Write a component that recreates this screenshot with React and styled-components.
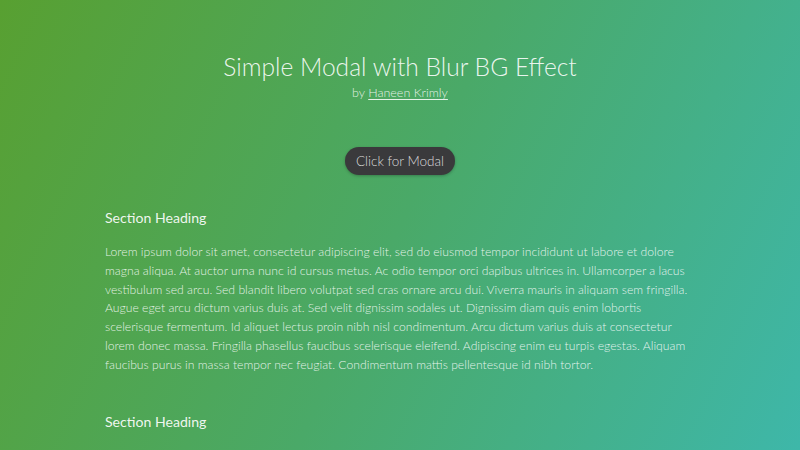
import React from "react";
import styled, { createGlobalStyle } from "styled-components";

const GlobalStyle = createGlobalStyle`
  html, body {
    margin: 0;
    padding: 0;
    height: 100%;
  }
  body {
    font-family: Lato, "Open Sans", sans-serif;
    font-weight: 300;
    color: rgba(255, 255, 255, 0.85);
    background: linear-gradient(115deg, #58a031 0%, #4aa968 50%, #3eb7a9 100%);
    background-attachment: fixed;
    min-height: 450px;
    overflow: hidden;
  }
`;

const Page = styled.div`
  width: 100%;
  display: flex;
  flex-direction: column;
  align-items: center;
`;

const Header = styled.header`
  padding-top: 50px;
  display: flex;
  flex-direction: column;
  align-items: center;
`;

const Title = styled.h1`
  margin: 0;
  font-size: 24.6px;
  font-weight: 300;
  line-height: 34px;
  color: rgba(255, 255, 255, 0.9);
`;

const Byline = styled.p`
  margin: 0;
  font-size: 12.5px;
  line-height: 17px;
  color: rgba(255, 255, 255, 0.85);

  a {
    color: inherit;
    text-decoration: underline;
    text-underline-offset: 2px;
  }
`;

const ModalButton = styled.button`
  margin-top: 46px;
  height: 28px;
  padding: 0 11px;
  border: 0;
  border-radius: 14px;
  background: #3a3a3c;
  color: rgba(255, 255, 255, 0.82);
  font-family: Lato, sans-serif;
  font-weight: 300;
  font-size: 13.5px;
  box-shadow: 0 1px 3px rgba(0, 0, 0, 0.25);
  cursor: pointer;
`;

const Content = styled.main`
  width: 590px;
  margin-top: 33px;
  display: flex;
  flex-direction: column;
`;

const Section = styled.section`
  margin-bottom: 37px;
`;

const Heading = styled.h2`
  margin: 0 0 15px;
  font-size: 14.1px;
  font-weight: 400;
  line-height: 20px;
  color: rgba(255, 255, 255, 0.92);
`;

const Paragraph = styled.p`
  margin: 0;
  font-size: 12.2px;
  line-height: 18.8px;
  color: rgba(255, 255, 255, 0.86);
`;

const lorem =
  "Lorem ipsum dolor sit amet, consectetur adipiscing elit, sed do eiusmod tempor incididunt ut labore et dolore magna aliqua. At auctor urna nunc id cursus metus. Ac odio tempor orci dapibus ultrices in. Ullamcorper a lacus vestibulum sed arcu. Sed blandit libero volutpat sed cras ornare arcu dui. Viverra mauris in aliquam sem fringilla. Augue eget arcu dictum varius duis at. Sed velit dignissim sodales ut. Dignissim diam quis enim lobortis scelerisque fermentum. Id aliquet lectus proin nibh nisl condimentum. Arcu dictum varius duis at consectetur lorem donec massa. Fringilla phasellus faucibus scelerisque eleifend. Adipiscing enim eu turpis egestas. Aliquam faucibus purus in massa tempor nec feugiat. Condimentum mattis pellentesque id nibh tortor.";

export default function App() {
  return (
    <>
      <GlobalStyle />
      <Page>
        <Header>
          <Title>Simple Modal with Blur BG Effect</Title>
          <Byline>
            by <a href="#">Haneen Krimly</a>
          </Byline>
          <ModalButton>Click for Modal</ModalButton>
        </Header>
        <Content>
          <Section>
            <Heading>Section Heading</Heading>
            <Paragraph>{lorem}</Paragraph>
          </Section>
          <Section>
            <Heading>Section Heading</Heading>
            <Paragraph>{lorem}</Paragraph>
          </Section>
        </Content>
      </Page>
    </>
  );
}
